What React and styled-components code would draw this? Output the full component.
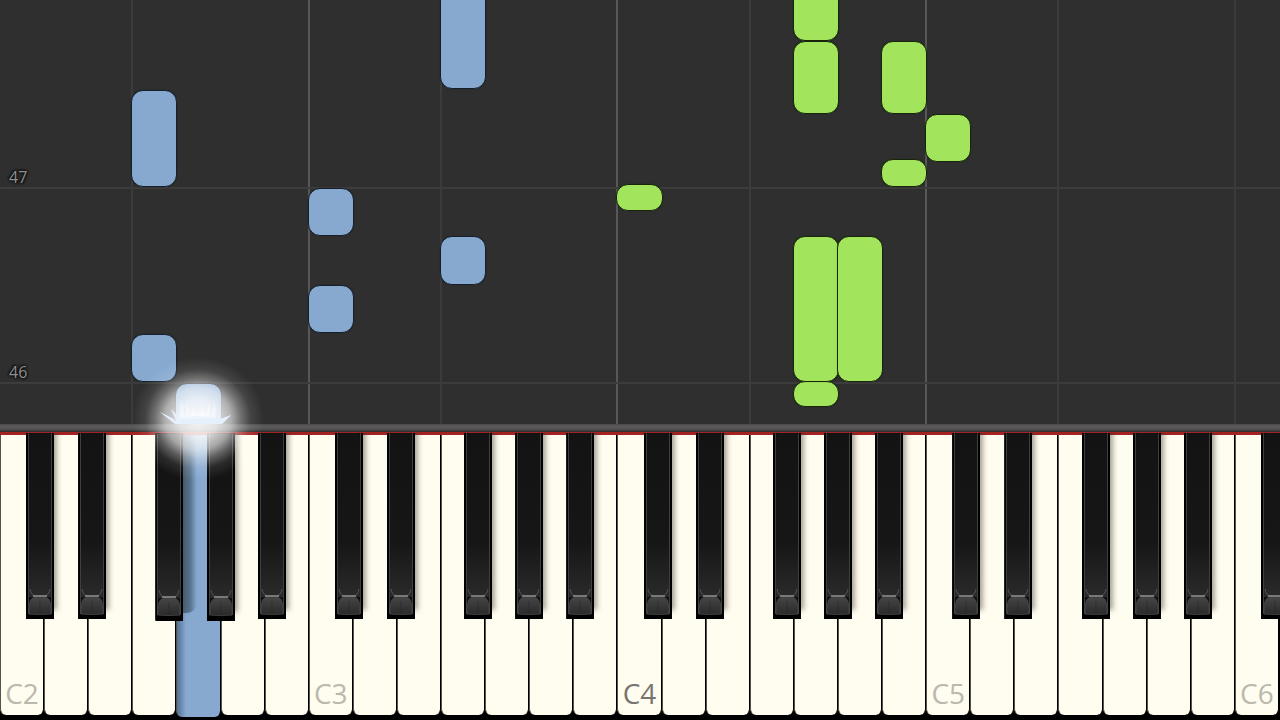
import React from 'react';
import styled, { createGlobalStyle, css } from 'styled-components';

const GlobalStyle = createGlobalStyle`
    * {
        box-sizing: border-box;
    }
    body {
        margin: 0;
        background: #000000;
        font-family: "Open Sans", "Noto Sans", sans-serif;
    }
`
const Screen = styled.main`
    display: flex;
    flex-direction: column;
    height: 100vh;
    overflow: hidden;
`
const Roll = styled.section`
    position: relative;
    flex: 1;
    overflow: hidden;
    background: #2f2f2f;
`
const Lane = styled.div`
    position: absolute;
    top: 0;
    bottom: 0;
    left: calc((100% - 1px) * ${props => props.$col} / 29);
    width: 2px;
    margin-left: -1px;
    background: ${props => props.$strong ? '#585858' : '#3b3b3b'};
`
const Measure = styled.div`
    position: absolute;
    left: 0;
    right: 0;
    bottom: ${props => props.$bottom}px;
    height: 2px;
    background: #3c3c3c;
`
const MeasureNumber = styled.span`
    position: absolute;
    left: 9px;
    bottom: 0;
    font-size: 16px;
    line-height: 24px;
    color: #909090;
    text-shadow: 0 0 2px #111111, 0 0 3px #111111, 1px 1px 2px #111111, -1px -1px 2px #111111;
`
const Note = styled.div`
    position: absolute;
    left: calc((100% - 1px) * ${props => props.$col} / 29 - 1px);
    bottom: ${props => props.$bottom}px;
    width: calc(100% / 29 + 2px);
    height: ${props => props.$length}px;
    border: 1px solid ${props => props.$hand === 'left' ? '#16202c' : '#17260a'};
    border-radius: 12px;
    background: ${props => props.$hand === 'left' ? '#87a9d0' : '#a2e55c'};
    box-shadow: 0 0 1px rgba(0, 0, 0, 0.5);
`
const Ledge = styled.div`
    flex: none;
    height: 8px;
    background: linear-gradient(#484848 0, #5c5a5c 2px, #555355 5px, #3a3a3a 7px, #2c2626 8px);
`
const Keyboard = styled.section`
    position: relative;
    flex: none;
    height: 288px;
    padding: 0 1px 5px 0;
    border-top: 3px solid #a32222;
    background: #000000;
`
const Keys = styled.div`
    display: grid;
    grid-template-columns: repeat(29, 1fr);
    height: 100%;
`
const KeySlot = styled.div`
    position: relative;
    min-width: 0;
`
const WhiteKey = styled.button`
    display: flex;
    align-items: flex-end;
    justify-content: center;
    width: 100%;
    height: 100%;
    padding: 0 0 3px;
    border: 0;
    border-left: 1px solid #55534b;
    border-right: 1px solid #000000;
    border-radius: 0 0 6px 6px;
    background: #fffcf0;
    font-family: inherit;
    font-size: 28px;
    line-height: 38px;
    color: ${props => props.$middle ? '#77756f' : '#bbb8ac'};
    ${props => props.$pressed && css`
        height: calc(100% + 2px);
        background: linear-gradient(90deg, #54708f 0, #6f90b7 5px, #87a9d0 9px);
    `}
`
const BlackKey = styled.button`
    position: absolute;
    z-index: 2;
    top: -2px;
    right: ${props => props.$shift}px;
    width: 28px;
    height: ${props => props.$low ? 188 : 186}px;
    padding: 0;
    border: 0;
    background: #000000;
    box-shadow: 4px -8px 5px -1px rgba(60, 55, 40, 0.45);
    clip-path: inset(0 -14px 0 0);
`
const BlackKeyArt = styled.svg`
    display: block;
    width: 28px;
    height: 186px;
`
const KeyShade = styled.div`
    position: absolute;
    z-index: 1;
    top: 0;
    left: 6px;
    width: 15px;
    height: 178px;
    border-radius: 0 0 10px 0;
    background: linear-gradient(90deg, #54708f 0, #58738f 8px, rgba(88, 115, 150, 0) 15px);
`
const HitGlow = styled.svg`
    position: absolute;
    z-index: 3;
    top: -121px;
    left: calc(100% * 4.5 / 29 - 90px);
    width: 180px;
    height: 180px;
    pointer-events: none;
`

const notes = [
    { hand: 'left', col: 3, bottom: 237, length: 97 },
    { hand: 'left', col: 3, bottom: 42, length: 48 },
    { hand: 'left', col: 4, bottom: -10, length: 51 },
    { hand: 'left', col: 7, bottom: 188, length: 48 },
    { hand: 'left', col: 7, bottom: 91, length: 48 },
    { hand: 'left', col: 10, bottom: 335, length: 146 },
    { hand: 'left', col: 10, bottom: 139, length: 49 },
    { hand: 'right', col: 14, bottom: 213, length: 27 },
    { hand: 'right', col: 18, bottom: 383, length: 72 },
    { hand: 'right', col: 18, bottom: 310, length: 73 },
    { hand: 'right', col: 18, bottom: 17, length: 26 },
    { hand: 'right', col: 18, bottom: 42, length: 146 },
    { hand: 'right', col: 19, bottom: 42, length: 146 },
    { hand: 'right', col: 20, bottom: 310, length: 73 },
    { hand: 'right', col: 20, bottom: 237, length: 28 },
    { hand: 'right', col: 21, bottom: 262, length: 48 },
]

const measures = [
    { number: 47, bottom: 235 },
    { number: 46, bottom: 40 },
]

const lanes = [3, 7, 10, 14, 17, 21, 24, 28]
const strongLanes = [7, 14, 21]

// how far each sharp hangs over the next white key
const sharps = { C: -10, D: -18, F: -7, G: -14, A: -21 }

const keys = Array.from({ length: 29 }, (_, i) => ({
    name: 'CDEFGAB'[i % 7],
    octave: 2 + Math.floor(i / 7),
    pressed: i === 4,
}))

const Sharp = ({ shift, low, label }) => (
    <BlackKey $shift={shift} $low={low} aria-label={label}>
        <BlackKeyArt viewBox="0 0 28 186" aria-hidden="true">
            <rect width="28" height="186" fill="#000000" />
            <rect x="3" y="0" width="22" height="181" rx="2" fill="url(#keyBody)" />
            <path d="M2.5 0V181M25.5 0V181" stroke="#3f3f3f" strokeWidth="1" />
            <path d="M3 164H25V182H3Z" fill="#101010" />
            <path d="M3 181V173Q4 165 8 164.500H20Q24 165 25 173V181Q14 182 3 181Z" fill="url(#keyTip)" stroke="#505050" strokeWidth="0.6" />
            <path d="M14 168V181" stroke="#262626" strokeWidth="0.6" />
            <path d="M4 156Q5 162 9 163H19Q23 162 24 156" fill="none" stroke="#666666" strokeWidth="0.7" />
            <path d="M7 163H21" stroke="#b5b5b5" strokeWidth="1" />
        </BlackKeyArt>
    </BlackKey>
)

const Glow = () => (
    <HitGlow viewBox="0 0 180 180" aria-hidden="true">
        <defs>
            <radialGradient id="glow">
                <stop offset="0" stopColor="#ffffff" stopOpacity="0.95" />
                <stop offset="0.3" stopColor="#ffffff" stopOpacity="0.82" />
                <stop offset="0.5" stopColor="#ffffff" stopOpacity="0.62" />
                <stop offset="0.65" stopColor="#ffffff" stopOpacity="0.32" />
                <stop offset="0.8" stopColor="#ffffff" stopOpacity="0.1" />
                <stop offset="1" stopColor="#ffffff" stopOpacity="0" />
            </radialGradient>
            <linearGradient id="keyBody" x1="0" y1="0" x2="0" y2="1">
                <stop offset="0" stopColor="#131313" />
                <stop offset="0.6" stopColor="#161616" />
                <stop offset="1" stopColor="#303030" />
            </linearGradient>
            <linearGradient id="keyTip" x1="0" y1="0" x2="0" y2="1">
                <stop offset="0" stopColor="#454545" />
                <stop offset="1" stopColor="#292929" />
            </linearGradient>
        </defs>
        <ellipse cx="89" cy="105" rx="66" ry="62" fill="url(#glow)" />
        <path
            d="M66 110L51 98L63 104L67 107L62 95L69 102L74 101L78 104L84 102L96 102L102 104L107 101L111 105L122 101L113 110Z"
            fill="#e6f0fc"
        />
        <path
            d="M70 105L72 86L76 102L78 88L81 102L85 93L87 104L95 93L96 103L101 87L101 103L106 88L107 104Z"
            fill="#ffffff"
            opacity="0.4"
        />
    </HitGlow>
)

export default function App() {
    return (
        <Screen>
            <GlobalStyle />
            <Roll>
                {lanes.map(col => (
                    <Lane key={col} $col={col} $strong={strongLanes.includes(col)} />
                ))}
                {measures.map(({ number, bottom }) => (
                    <Measure key={number} $bottom={bottom}>
                        <MeasureNumber>{number}</MeasureNumber>
                    </Measure>
                ))}
                {notes.map((note, i) => (
                    <Note key={i} $hand={note.hand} $col={note.col} $bottom={note.bottom} $length={note.length} />
                ))}
            </Roll>
            <Ledge />
            <Keyboard>
                <Keys>
                    {keys.map(({ name, octave, pressed }) => (
                        <KeySlot key={name + octave}>
                            <WhiteKey $pressed={pressed} $middle={octave === 4} aria-label={name + octave}>
                                {name === 'C' && name + octave}
                            </WhiteKey>
                            {pressed && <KeyShade />}
                            {name in sharps && (
                                <Sharp
                                    shift={sharps[name]}
                                    low={octave === 2 && (name === 'F' || name === 'G')}
                                    label={`${name}♯${octave}`}
                                />
                            )}
                        </KeySlot>
                    ))}
                </Keys>
                <Glow />
            </Keyboard>
        </Screen>
    )
}
